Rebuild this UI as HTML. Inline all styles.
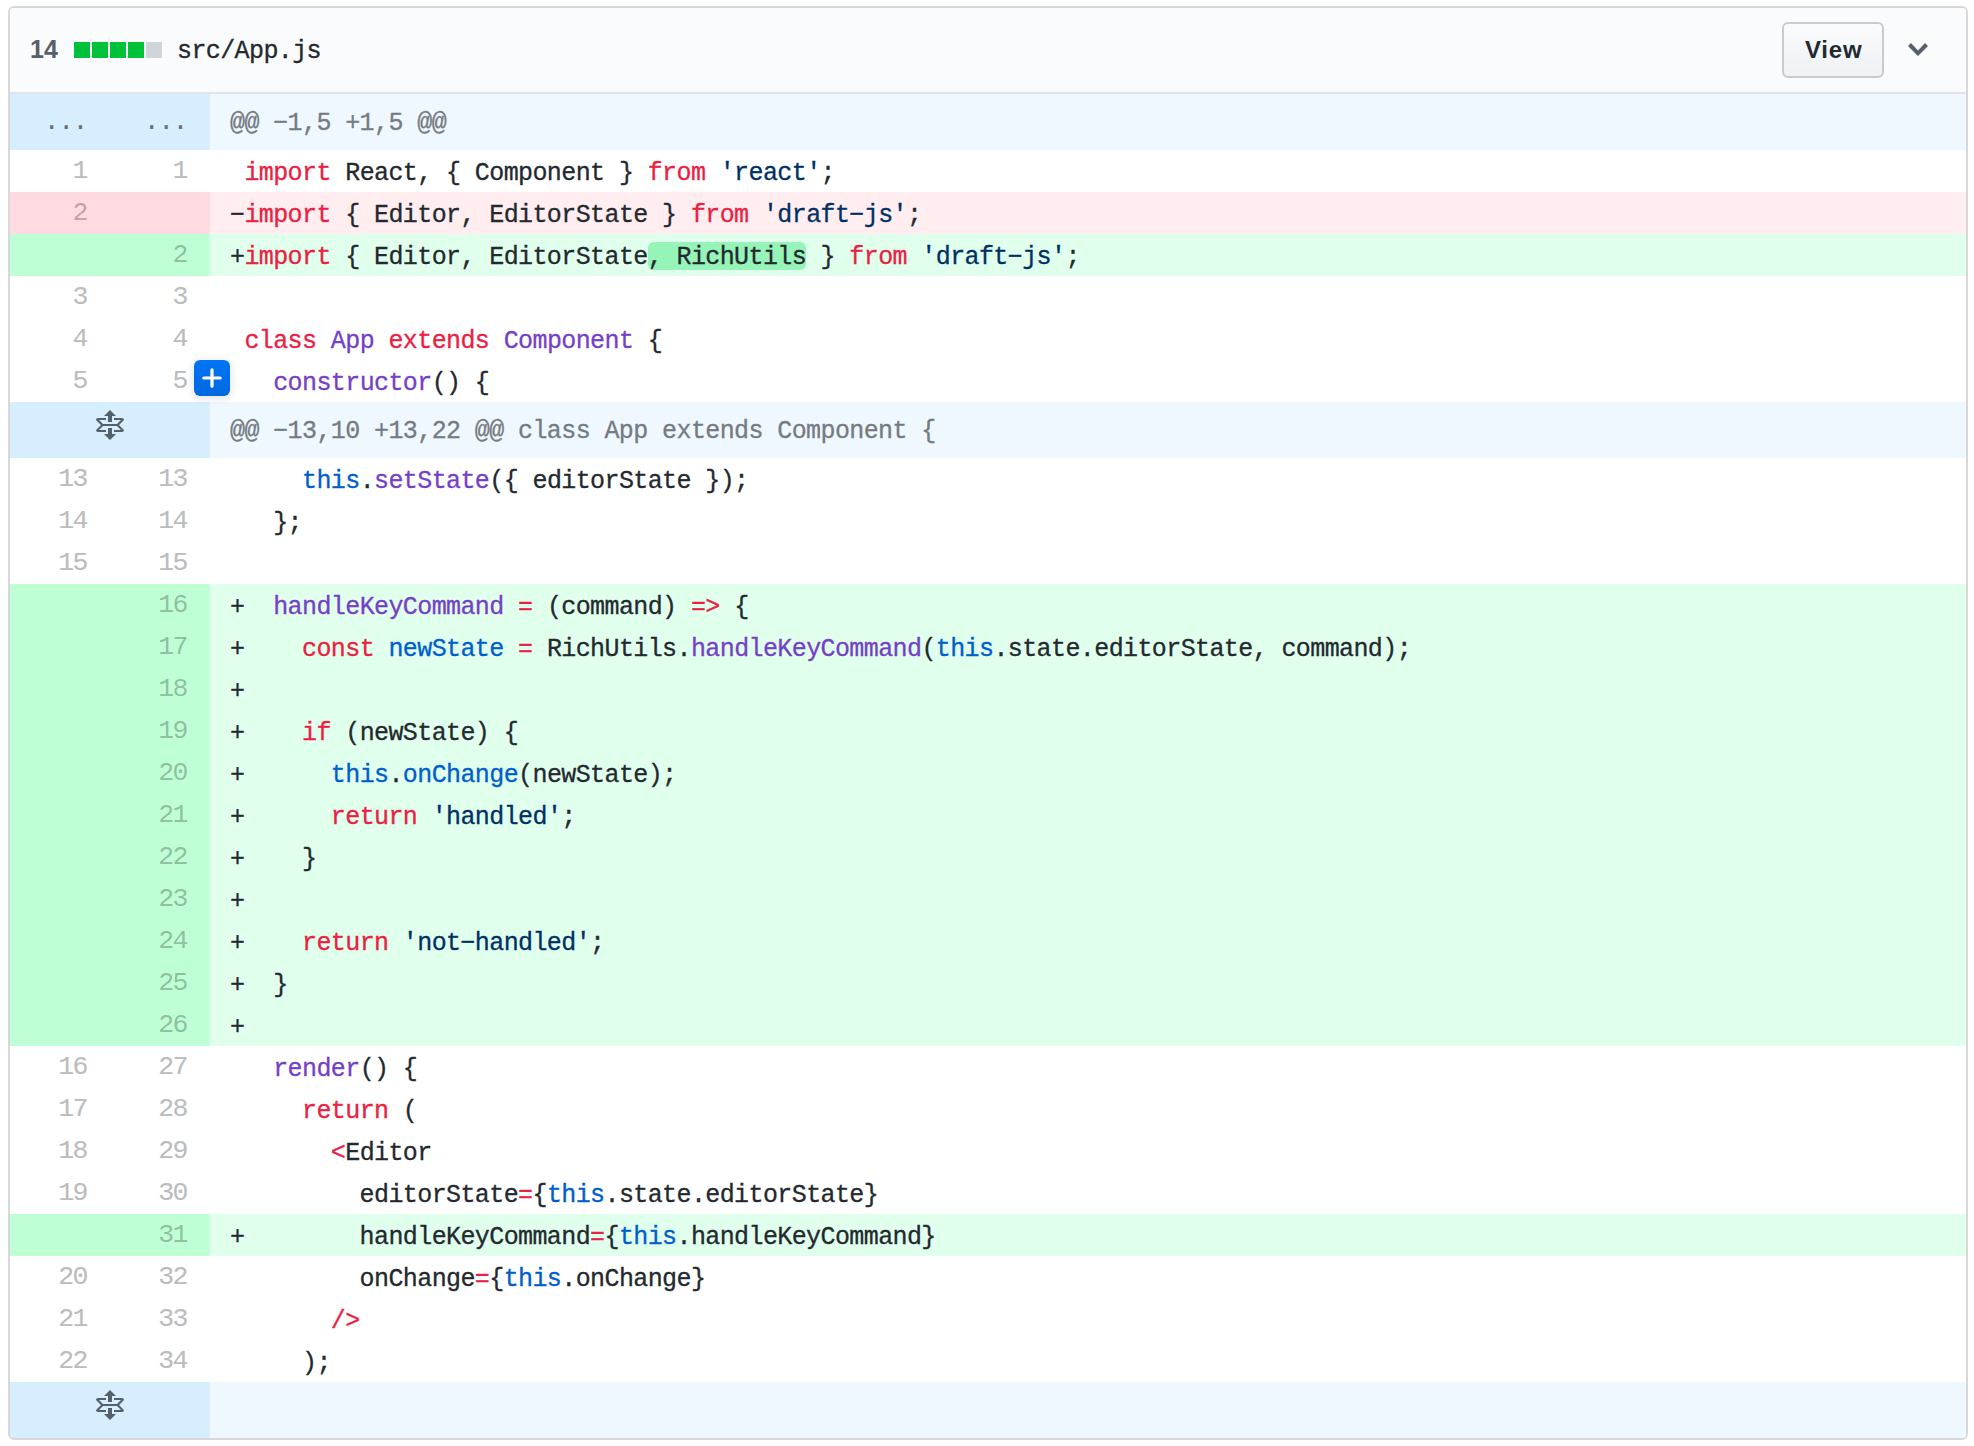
<!DOCTYPE html>
<html><head><meta charset="utf-8"><style>
*{margin:0;padding:0;box-sizing:border-box}
html,body{width:1974px;height:1446px;background:#fff;overflow:hidden}
body{-webkit-text-stroke:0.3px currentColor;font-family:"Liberation Mono",monospace;font-size:25px;letter-spacing:-0.6px;color:#23292f;position:relative}
.box{position:absolute;left:8px;top:6px;width:1960px;height:1434px;border:2px solid #d8d8d8;border-radius:6px;overflow:hidden;background:#fff}
.hdr{position:relative;height:86px;background:#fafbfc;border-bottom:2px solid #e0e4e8}
.ds{-webkit-text-stroke:0;letter-spacing:0;position:absolute;left:20px;top:29px;font:bold 25px "Liberation Sans",sans-serif;color:#56606a;line-height:24px}
.sq{position:absolute;top:34px;width:16px;height:16px;background:#00c13a}
.fn{position:absolute;left:167px;top:24px;line-height:40px;color:#23292f}
.btn{position:absolute;left:1772px;top:14px;width:102px;height:56px;border:2px solid #c8ccd1;border-radius:6px;background:linear-gradient(#fafbfc,#eff3f6 90%)}
.btn span{-webkit-text-stroke:0;letter-spacing:0.8px;position:absolute;left:21px;top:12px;font:bold 24px "Liberation Sans",sans-serif;color:#23292f;line-height:28px}
.chev{position:absolute;left:1898px;top:26px}
.r{position:relative;height:42px;display:flex;white-space:pre}
.r.h{height:56px}
.n{width:100px;flex:none;text-align:right;padding-right:23px;font-size:26.5px;letter-spacing:-1.5px;-webkit-text-stroke:0.1px currentColor;color:#bbbcbd;line-height:42px;position:relative}
.n span{position:relative;top:0px}
.t{position:relative;top:3px}
.nn{width:200px;flex:none;background:#d7eeff;position:relative}
.unfold{position:absolute;left:86px;top:8px}
.cd{flex:1;padding-left:20px;line-height:42px;position:relative;top:0;z-index:0}
.cd{}
.h .n{background:#d7eeff;color:#6b7075;line-height:56px}
.h .n span{position:relative;top:0px}
.h .cd{background:#eff8ff;color:#767b81;line-height:56px}
.h .cd span{position:relative;top:2px}
.add .n{background:#bfffd5;color:rgba(27,31,35,.3)}
.add .cd{background:#e0ffec}
.del .n{background:#ffdae0;color:rgba(27,31,35,.3)}
.del .cd{background:#ffedf0}
i{font-style:normal}
i.k{color:#ea2143} i.e{color:#763fc8} i.c{color:#005ecc} i.s{color:#003066}
.hl{position:absolute;left:438px;top:8px;width:158px;height:28px;border-radius:6px;background:#96f4b8;z-index:-1}
.txt{position:relative;z-index:1}
.plus{position:absolute;left:194px;top:360px;width:36px;height:36px;border-radius:6px;background:linear-gradient(#0074f8,#0068de);box-shadow:0 2px 8px rgba(27,31,35,.15);z-index:5}
</style></head>
<body><div class="box"><div class="hdr"><div class="ds">14</div><div class="sq" style="left:64px;"></div><div class="sq" style="left:82px;"></div><div class="sq" style="left:100px;"></div><div class="sq" style="left:118px;"></div><div class="sq" style="left:136px;background:#d0d5db"></div><div class="fn">src/App.js</div><div class="btn"><span>View</span></div><svg class="chev" width="20" height="32" viewBox="0 0 10 16"><path fill="#56606a" d="M5 11L0 6l1.5-1.5L5 8.25 8.5 4.5 10 6l-5 5z"/></svg></div><div class="r h"><div class="n"><span>...</span></div><div class="n"><span>...</span></div><div class="cd"><span>@@ −1,5 +1,5 @@</span></div></div><div class="r ctx"><div class="n"><span>1</span></div><div class="n"><span>1</span></div><div class="cd"><span class="t"> <i class="k">import</i> React, { Component } <i class="k">from</i> <i class="s">&#x27;react&#x27;</i>;</span></div></div><div class="r del"><div class="n"><span>2</span></div><div class="n"><span></span></div><div class="cd"><span class="t">−<i class="k">import</i> { Editor, EditorState } <i class="k">from</i> <i class="s">&#x27;draft−js&#x27;</i>;</span></div></div><div class="r add"><div class="n"><span></span></div><div class="n"><span>2</span></div><div class="cd"><b class="hl"></b><span class="t">+<i class="k">import</i> { Editor, EditorState, RichUtils } <i class="k">from</i> <i class="s">&#x27;draft−js&#x27;</i>;</span></div></div><div class="r ctx"><div class="n"><span>3</span></div><div class="n"><span>3</span></div><div class="cd"><span class="t"> </span></div></div><div class="r ctx"><div class="n"><span>4</span></div><div class="n"><span>4</span></div><div class="cd"><span class="t"> <i class="k">class</i> <i class="e">App</i> <i class="k">extends</i> <i class="e">Component</i> {</span></div></div><div class="r ctx"><div class="n"><span>5</span></div><div class="n"><span>5</span></div><div class="cd"><span class="t">   <i class="e">constructor</i>() {</span></div></div><div class="r h"><div class="nn"><svg class="unfold" width="28" height="32" viewBox="0 0 14 16"><path fill="#56606a" d="M11.5 7.5L14 10c0 .55-.45 1-1 1H9v-1h3.5l-2-2h-7l-2 2H5v1H1c-.55 0-1-.45-1-1l2.5-2.5L0 5c0-.55.45-1 1-1h4v1H1.5l2 2h7l2-2H9V4h4c.55 0 1 .45 1 1l-2.5 2.5zM6 6h2V3h2L7 0 4 3h2v3zm2 3H6v3H4l3 3 3-3H8V9z"/></svg></div><div class="cd"><span>@@ −13,10 +13,22 @@ class App extends Component {</span></div></div><div class="r ctx"><div class="n"><span>13</span></div><div class="n"><span>13</span></div><div class="cd"><span class="t">     <i class="c">this</i>.<i class="e">setState</i>({ editorState });</span></div></div><div class="r ctx"><div class="n"><span>14</span></div><div class="n"><span>14</span></div><div class="cd"><span class="t">   };</span></div></div><div class="r ctx"><div class="n"><span>15</span></div><div class="n"><span>15</span></div><div class="cd"><span class="t"> </span></div></div><div class="r add"><div class="n"><span></span></div><div class="n"><span>16</span></div><div class="cd"><span class="t">+  <i class="e">handleKeyCommand</i> <i class="k">=</i> (command) <i class="k">=&gt;</i> {</span></div></div><div class="r add"><div class="n"><span></span></div><div class="n"><span>17</span></div><div class="cd"><span class="t">+    <i class="k">const</i> <i class="c">newState</i> <i class="k">=</i> RichUtils.<i class="e">handleKeyCommand</i>(<i class="c">this</i>.state.editorState, command);</span></div></div><div class="r add"><div class="n"><span></span></div><div class="n"><span>18</span></div><div class="cd"><span class="t">+</span></div></div><div class="r add"><div class="n"><span></span></div><div class="n"><span>19</span></div><div class="cd"><span class="t">+    <i class="k">if</i> (newState) {</span></div></div><div class="r add"><div class="n"><span></span></div><div class="n"><span>20</span></div><div class="cd"><span class="t">+      <i class="c">this</i>.<i class="c">onChange</i>(newState);</span></div></div><div class="r add"><div class="n"><span></span></div><div class="n"><span>21</span></div><div class="cd"><span class="t">+      <i class="k">return</i> <i class="s">&#x27;handled&#x27;</i>;</span></div></div><div class="r add"><div class="n"><span></span></div><div class="n"><span>22</span></div><div class="cd"><span class="t">+    }</span></div></div><div class="r add"><div class="n"><span></span></div><div class="n"><span>23</span></div><div class="cd"><span class="t">+</span></div></div><div class="r add"><div class="n"><span></span></div><div class="n"><span>24</span></div><div class="cd"><span class="t">+    <i class="k">return</i> <i class="s">&#x27;not−handled&#x27;</i>;</span></div></div><div class="r add"><div class="n"><span></span></div><div class="n"><span>25</span></div><div class="cd"><span class="t">+  }</span></div></div><div class="r add"><div class="n"><span></span></div><div class="n"><span>26</span></div><div class="cd"><span class="t">+</span></div></div><div class="r ctx"><div class="n"><span>16</span></div><div class="n"><span>27</span></div><div class="cd"><span class="t">   <i class="e">render</i>() {</span></div></div><div class="r ctx"><div class="n"><span>17</span></div><div class="n"><span>28</span></div><div class="cd"><span class="t">     <i class="k">return</i> (</span></div></div><div class="r ctx"><div class="n"><span>18</span></div><div class="n"><span>29</span></div><div class="cd"><span class="t">       <i class="k">&lt;</i>Editor</span></div></div><div class="r ctx"><div class="n"><span>19</span></div><div class="n"><span>30</span></div><div class="cd"><span class="t">         editorState<i class="k">=</i>{<i class="c">this</i>.state.editorState}</span></div></div><div class="r add"><div class="n"><span></span></div><div class="n"><span>31</span></div><div class="cd"><span class="t">+        handleKeyCommand<i class="k">=</i>{<i class="c">this</i>.handleKeyCommand}</span></div></div><div class="r ctx"><div class="n"><span>20</span></div><div class="n"><span>32</span></div><div class="cd"><span class="t">         onChange<i class="k">=</i>{<i class="c">this</i>.onChange}</span></div></div><div class="r ctx"><div class="n"><span>21</span></div><div class="n"><span>33</span></div><div class="cd"><span class="t">       <i class="k">/&gt;</i></span></div></div><div class="r ctx"><div class="n"><span>22</span></div><div class="n"><span>34</span></div><div class="cd"><span class="t">     );</span></div></div><div class="r h"><div class="nn"><svg class="unfold" width="28" height="32" viewBox="0 0 14 16"><path fill="#56606a" d="M11.5 7.5L14 10c0 .55-.45 1-1 1H9v-1h3.5l-2-2h-7l-2 2H5v1H1c-.55 0-1-.45-1-1l2.5-2.5L0 5c0-.55.45-1 1-1h4v1H1.5l2 2h7l2-2H9V4h4c.55 0 1 .45 1 1l-2.5 2.5zM6 6h2V3h2L7 0 4 3h2v3zm2 3H6v3H4l3 3 3-3H8V9z"/></svg></div><div class="cd"><span></span></div></div></div><div class="plus"><svg width="36" height="36" style="position:absolute;left:0;top:0"><path d="M18 9.8V26.2M9.8 18H26.2" stroke="#fff" stroke-width="3.2" stroke-linecap="round"/></svg></div></body></html>
